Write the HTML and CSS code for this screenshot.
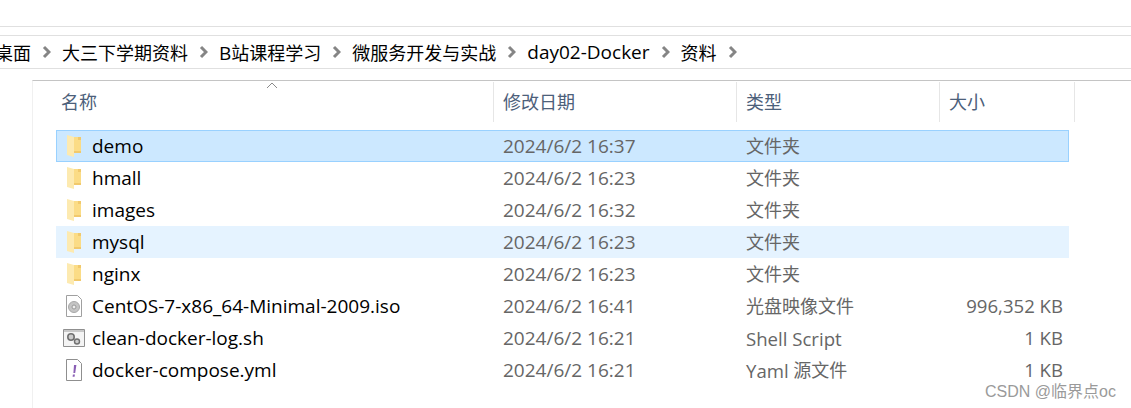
FILE: index.html
```html
<!DOCTYPE html>
<html lang="zh-CN">
<head>
    <meta charset="UTF-8">
    <title>资料</title>
    <link rel="stylesheet" href="styles.css">
</head>
<body>
    <svg class="defs" width="0" height="0">
        <symbol id="folder" viewBox="0 0 16 22">
            <path d="M4 2h11v16H4z" fill="#f1c96c"/>
            <path d="M1 0l7 2v20l-7-2z" fill="#fdeab0"/>
            <path d="M8 2h4v3h3v11H8z" fill="#fbdc86"/>
        </symbol>
        <symbol id="chevron" viewBox="0 0 9 14">
            <path d="M2 2l5 5-5 5" fill="none" stroke="#858585" stroke-width="3"/>
        </symbol>
    </svg>

    <div class="toolbar"></div>

    <nav class="crumbs">
        <span class="crumb first">桌面</span>
        <svg class="sep"><use href="#chevron"/></svg>
        <span class="crumb">大三下学期资料</span>
        <svg class="sep"><use href="#chevron"/></svg>
        <span class="crumb"><span class="latin">B</span>站课程学习</span>
        <svg class="sep"><use href="#chevron"/></svg>
        <span class="crumb">微服务开发与实战</span>
        <svg class="sep"><use href="#chevron"/></svg>
        <span class="crumb latin">day02-Docker</span>
        <svg class="sep"><use href="#chevron"/></svg>
        <span class="crumb">资料</span>
        <svg class="sep"><use href="#chevron"/></svg>
    </nav>

    <main class="pane">
        <div class="head">
            <div class="col-name">名称
                <svg class="sort" width="12" height="7" viewBox="0 0 12 7"><path d="M1 6l5-5 5 5" fill="none" stroke="#8a8a8a"/></svg>
            </div>
            <div class="col-date">修改日期</div>
            <div class="col-type">类型</div>
            <div class="col-size">大小</div>
        </div>

        <div class="files">
            <div class="row selected">
                <div class="col-name"><svg class="icon"><use href="#folder"/></svg>demo</div>
                <div class="col-date">2024/6/2 16:37</div>
                <div class="col-type">文件夹</div>
                <div class="col-size"></div>
            </div>
            <div class="row">
                <div class="col-name"><svg class="icon"><use href="#folder"/></svg>hmall</div>
                <div class="col-date">2024/6/2 16:23</div>
                <div class="col-type">文件夹</div>
                <div class="col-size"></div>
            </div>
            <div class="row">
                <div class="col-name"><svg class="icon"><use href="#folder"/></svg>images</div>
                <div class="col-date">2024/6/2 16:32</div>
                <div class="col-type">文件夹</div>
                <div class="col-size"></div>
            </div>
            <div class="row hover">
                <div class="col-name"><svg class="icon"><use href="#folder"/></svg>mysql</div>
                <div class="col-date">2024/6/2 16:23</div>
                <div class="col-type">文件夹</div>
                <div class="col-size"></div>
            </div>
            <div class="row">
                <div class="col-name"><svg class="icon"><use href="#folder"/></svg>nginx</div>
                <div class="col-date">2024/6/2 16:23</div>
                <div class="col-type">文件夹</div>
                <div class="col-size"></div>
            </div>
            <div class="row">
                <div class="col-name">
                    <svg class="icon" viewBox="0 0 16 22">
                        <path d="M.5 .5h11l4 4v17H.5z" fill="#fff" stroke="#a0a0a0"/>
                        <circle cx="8" cy="12" r="5.5" fill="#c4c4c4" stroke="#a8a8a8"/>
                        <circle cx="8" cy="12" r="2" fill="#eee" stroke="#999"/>
                    </svg>CentOS-7-x86_64-Minimal-2009.iso
                </div>
                <div class="col-date">2024/6/2 16:41</div>
                <div class="col-type">光盘映像文件</div>
                <div class="col-size">996,352 KB</div>
            </div>
            <div class="row">
                <div class="col-name">
                    <svg class="icon wide" viewBox="0 0 22 18">
                        <path d="M.5 .5h21v17H.5z" fill="#f4f4f4" stroke="#8f8f8f"/>
                        <path d="M1 1h20v2H1z" fill="#c8c8c8"/>
                        <circle cx="8" cy="8" r="3.2" fill="#ccc" stroke="#707070" stroke-width="1.6"/>
                        <circle cx="14" cy="12.5" r="2.5" fill="#ccc" stroke="#707070" stroke-width="1.4"/>
                    </svg>clean-docker-log.sh
                </div>
                <div class="col-date">2024/6/2 16:21</div>
                <div class="col-type"><span class="latin">Shell Script</span></div>
                <div class="col-size">1 KB</div>
            </div>
            <div class="row">
                <div class="col-name">
                    <svg class="icon" viewBox="0 0 16 22">
                        <path d="M.5 .5h11l4 4v17H.5z" fill="#fff" stroke="#8f8f8f"/>
                        <path d="M8 6h2.4l-1.2 8H7.4zM6.9 15.6h2l-.3 2.2h-2z" fill="#8a5fb5"/>
                    </svg>docker-compose.yml
                </div>
                <div class="col-date">2024/6/2 16:21</div>
                <div class="col-type"><span class="latin">Yaml</span> 源文件</div>
                <div class="col-size">1 KB</div>
            </div>
        </div>
        <div class="mark">CSDN @临界点oc</div>
    </main>
</body>
</html>
```

FILE: styles.css
```css
* {
    margin: 0;
    padding: 0;
    box-sizing: border-box;
}

body {
    font-family: "Open Sans", "Noto Sans CJK SC", sans-serif;
    font-size: 18px;
    color: #000;
    background: #fff;
    height: 408px;
    overflow: hidden;
}

.defs {
    position: absolute;
}

.latin {
    font-size: 19px;
}

.toolbar {
    height: 27px;
    border-bottom: 1px solid #e0e0e0;
}

.crumbs {
    display: flex;
    align-items: center;
    height: 34px;
    margin-top: 8px;
    border-top: 1px solid #e0e0e0;
    border-bottom: 1px solid #e0e0e0;
    white-space: nowrap;
}

.crumb.first {
    margin-left: -5px;
}

.sep {
    width: 9px;
    height: 14px;
    margin: 0 11px 0 11px;
}

.pane {
    position: relative;
    margin-top: 11px;
    margin-left: 32px;
    height: 328px;
    border-top: 1px solid #c4c4c4;
    border-left: 1px solid #f0f0f0;
}

.head,
.row {
    display: grid;
    align-items: center;
}

.row {
    grid-template-columns: 437px 243px 203px 128px;
}

.head {
    height: 41px;
    width: 1042px;
    color: #4c607a;
    grid-template-columns: 461px 243px 203px 135px;
}

.head > div {
    height: 40px;
    line-height: 40px;
    border-right: 1px solid #e6e6e6;
    padding-left: 9px;
}

.head .col-name {
    position: relative;
    padding-left: 28px;
}

.sort {
    position: absolute;
    top: 0;
    left: 233px;
}

.files {
    margin-top: 8px;
    margin-left: 23px;
    width: 1013px;
}

.row {
    height: 32px;
    color: #666;
    border: 1px solid transparent;
}

.row .col-name {
    display: flex;
    align-items: center;
    padding-left: 9px;
    color: #000;
    font-size: 19px;
    white-space: nowrap;
}

.row .col-date,
.row .col-type {
    padding-left: 9px;
}

.row .col-date {
    font-size: 19px;
}

.row .col-type {
    position: relative;
    top: -1px;
}

.row .col-type .latin {
    position: relative;
    top: 1px;
    font-size: 18.6px;
}

.row .col-size {
    position: relative;
    top: -1px;
    text-align: right;
    padding-right: 5px;
    font-size: 18.6px;
}

.row.selected {
    background: #cce8ff;
    border-color: #99d1ff;
}

.row.hover {
    background: #e5f3ff;
}

.icon {
    width: 16px;
    height: 22px;
    margin-right: 10px;
    flex-shrink: 0;
}

.icon.wide {
    width: 22px;
    height: 18px;
    margin-left: -3px;
    margin-right: 7px;
}

.mark {
    position: absolute;
    right: 15px;
    bottom: 6px;
    font-family: "Liberation Sans", "Noto Sans CJK SC", sans-serif;
    font-size: 16px;
    color: #9a9a9a;
}
```
